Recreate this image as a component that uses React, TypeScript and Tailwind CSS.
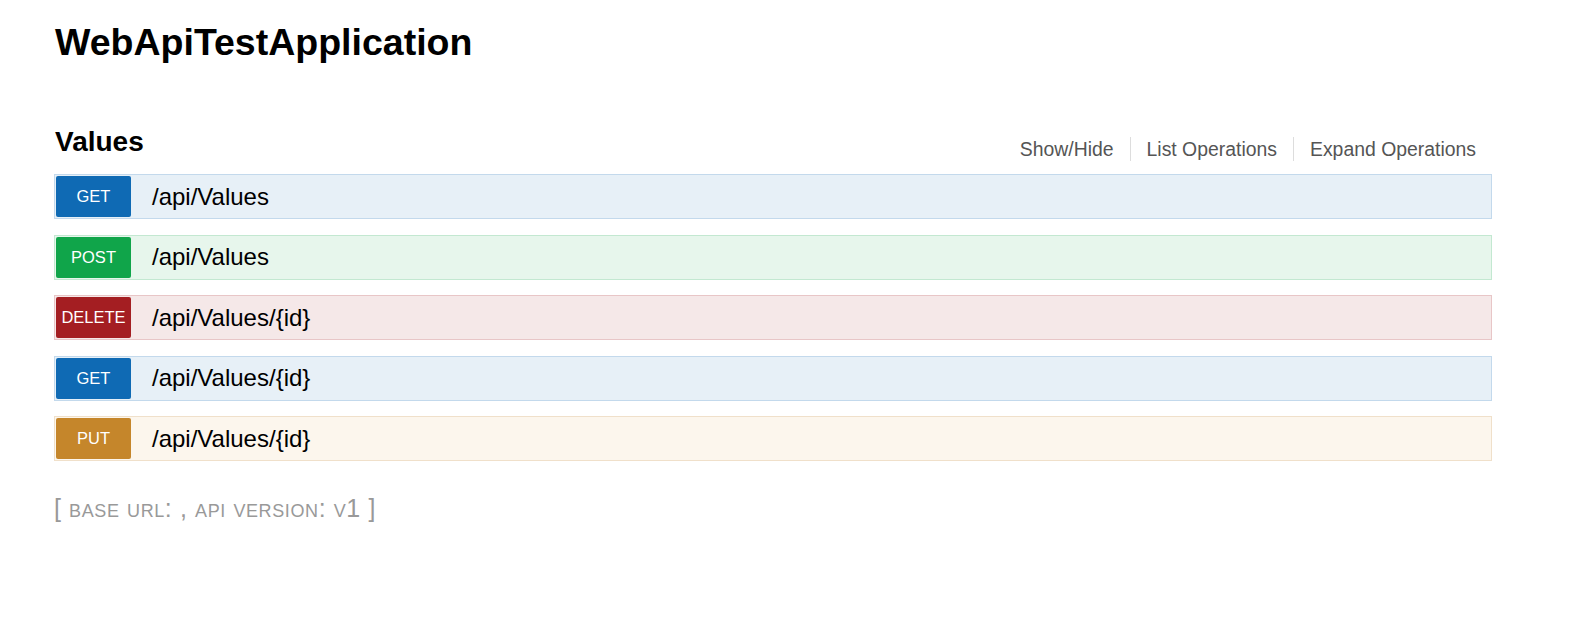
const ops = [
  { method: "get", path: "/api/Values" },
  { method: "post", path: "/api/Values" },
  { method: "delete", path: "/api/Values/{id}" },
  { method: "get", path: "/api/Values/{id}" },
  { method: "put", path: "/api/Values/{id}" },
];

const styles: Record<string, { row: string; badge: string }> = {
  get: { row: "bg-[#e7f0f7] border-[#c3d9ec]", badge: "bg-[#0f6ab4]" },
  post: { row: "bg-[#e7f6ec] border-[#c3e8d1]", badge: "bg-[#10a54a]" },
  delete: { row: "bg-[#f5e8e8] border-[#e8c6c7]", badge: "bg-[#a41e22]" },
  put: { row: "bg-[#fcf6ed] border-[#f0e0ca]", badge: "bg-[#c5862b]" },
};

export default function App() {
  return (
    <div className="min-h-screen bg-white font-['Liberation_Sans',Arial,sans-serif]">
      <div className="ml-[54px] w-[1438px] pt-[21px]">
        {/* Header */}
        <h1 className="text-[37.5px] leading-[42px] font-bold text-black pl-[1px]">
          WebApiTestApplication
        </h1>

        {/* Resource */}
        <div className="mt-[64px] flex items-end justify-between">
          <h2 className="text-[28px] leading-[30px] font-bold text-black pl-[1px]">Values</h2>
          <ul className="flex items-center text-[19.4px] text-[#555] -mb-[4px]">
            <li className="px-[16px] border-r border-[#ddd] leading-[24px]">Show/Hide</li>
            <li className="px-[16px] border-r border-[#ddd] leading-[24px]">List Operations</li>
            <li className="pl-[16px] pr-[16px] leading-[24px]">Expand Operations</li>
          </ul>
        </div>

        <div className="mt-[17px] flex flex-col gap-[15.5px]">
          {ops.map((op, i) => (
            <div
              key={i}
              className={`flex items-stretch h-[45px] border p-[1px] ${styles[op.method].row}`}
            >
              <span
                className={`w-[75px] rounded-[2px] flex items-center justify-center text-white text-[16.5px] uppercase ${styles[op.method].badge}`}
              >
                {op.method}
              </span>
              <span className="flex items-center pl-[21px] text-[24px] text-black">{op.path}</span>
            </div>
          ))}
        </div>

        {/* Footer */}
        <div className="mt-[29px] text-[25px] tracking-[0.6px] text-[#999] [font-variant:small-caps]">
          [ base url: , api version: v1 ]
        </div>
      </div>
    </div>
  );
}
